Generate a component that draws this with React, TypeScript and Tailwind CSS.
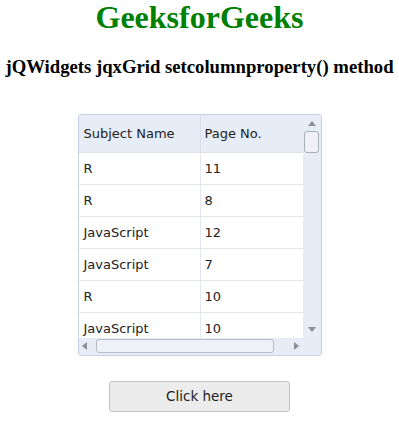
const rows: [string, string][] = [
  ["R", "11"],
  ["R", "8"],
  ["JavaScript", "12"],
  ["JavaScript", "7"],
  ["R", "10"],
  ["JavaScript", "10"],
];

const grid = "font-['DejaVu_Sans',Verdana,sans-serif] text-[13px] text-[#222]";

function Arrow({ dir }: { dir: "up" | "down" | "left" | "right" }) {
  const pts: Record<string, string> = {
    up: "0,5 4,0 8,5",
    down: "0,0 8,0 4,5",
    left: "5,0 5,8 0,4",
    right: "0,0 0,8 5,4",
  };
  const vertical = dir === "up" || dir === "down";
  return (
    <svg width={vertical ? 8 : 5} height={vertical ? 5 : 8} viewBox={vertical ? "0 0 8 5" : "0 0 5 8"}>
      <polygon points={pts[dir]} fill="#8c9096" />
    </svg>
  );
}

export default function App() {
  return (
    <div className="w-[399px] h-[447px] bg-white flex flex-col items-center">
      <h1 className="mt-[1px] text-[32px] leading-none font-bold text-[#008000] font-['Liberation_Serif',serif]">
        GeeksforGeeks
      </h1>
      <h3 className="mt-[25px] text-[18.7px] leading-none font-bold text-black font-['Liberation_Serif',serif] whitespace-nowrap">
        jQWidgets jqxGrid setcolumnproperty() method
      </h3>

      <div className={`mt-[37px] w-[244px] h-[242px] border border-[#c5d1df] rounded-[3px] overflow-hidden flex flex-col ${grid}`}>
        <div className="flex flex-1 min-h-0">
          <div className="flex-1 min-w-0 overflow-hidden">
            <div className="flex h-[38px] bg-[#e7edf6] border-b border-[#dce3ec]">
              <div className="w-[122px] pl-[5px] pt-[1px] flex items-center border-r border-[#d7dfea]">Subject Name</div>
              <div className="flex-1 pl-[4px] pt-[1px] flex items-center">Page No.</div>
            </div>
            {rows.map(([s, p], i) => (
              <div key={i} className="flex h-[32px] bg-white border-b border-[#e4e8ee]">
                <div className="w-[122px] pl-[5px] pt-[2px] flex items-center border-r border-[#e4e8ee]">{s}</div>
                <div className="flex-1 pl-[4px] pt-[2px] flex items-center">{p}</div>
              </div>
            ))}
          </div>
          <div className="w-[18px] bg-[#e7edf6] flex flex-col items-center pt-[6px] pb-[6px]">
            <Arrow dir="up" />
            <div className="mt-[5px] w-[15px] h-[22px] border border-[#a9b0b8] rounded-[3px] bg-[#eef2f8]" />
            <div className="flex-1" />
            <Arrow dir="down" />
          </div>
        </div>
        <div className="h-[17px] flex bg-[#e7edf6]">
          <div className="flex-1 flex items-center pl-[3px] pr-[4px]">
            <Arrow dir="left" />
            <div className="ml-[9px] w-[178px] h-[14px] border border-[#b5bcc4] rounded-[3px] bg-[#eef2f8]" />
            <div className="flex-1" />
            <Arrow dir="right" />
          </div>
          <div className="w-[18px]" />
        </div>
      </div>

      <button className="mt-[25px] w-[181px] h-[31px] bg-[#ececec] border border-[#c2c2c2] rounded-[3px] font-['DejaVu_Sans',Verdana,sans-serif] text-[13.5px] text-[#222]">
        Click here
      </button>
    </div>
  );
}
